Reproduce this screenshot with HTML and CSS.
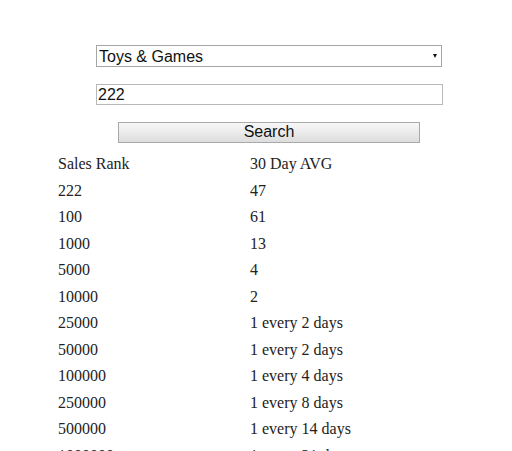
FILE: index.html
```html
<!DOCTYPE html>
<html>
<head>
<meta charset="utf-8">
<link rel="stylesheet" href="styles.css">
</head>
<body>
<div class="page">
  <form class="search">
    <div class="select-wrap">
      <select class="category">
        <option>Toys &amp; Games</option>
      </select>
      <span class="arrow"></span>
    </div>
    <input class="rank" type="text" value="222">
    <button class="btn" type="button">Search</button>
  </form>
  <div class="results">
    <div>Sales Rank</div><div>30 Day AVG</div>
    <div>222</div><div>47</div>
    <div>100</div><div>61</div>
    <div>1000</div><div>13</div>
    <div>5000</div><div>4</div>
    <div>10000</div><div>2</div>
    <div>25000</div><div>1 every 2 days</div>
    <div>50000</div><div>1 every 2 days</div>
    <div>100000</div><div>1 every 4 days</div>
    <div>250000</div><div>1 every 8 days</div>
    <div>500000</div><div>1 every 14 days</div>
    <div>1000000</div><div>1 every 21 days</div>
  </div>
</div>
</body>
</html>
```
FILE: styles.css
```css
html, body {
  margin: 0;
  padding: 0;
  background: #fff;
  overflow: hidden;
}
.page {
  padding-top: 45px;
  font-family: "Liberation Serif", "Times New Roman", serif;
  font-size: 16px;
  color: #222;
}
.search {
  display: flex;
  flex-direction: column;
  align-items: flex-start;
  padding-left: 96px;
  margin: 0;
}
.select-wrap {
  position: relative;
  width: 346px;
  height: 22px;
}
.category {
  appearance: none;
  -webkit-appearance: none;
  width: 346px;
  height: 22px;
  margin: 0;
  padding: 1px 0 0 2px;
  border: 1px solid #a6a6a6;
  border-radius: 0;
  background: #fff;
  font-family: "Liberation Sans", Arial, sans-serif;
  font-size: 16px;
  color: #111;
  line-height: 20px;
}
.arrow {
  position: absolute;
  right: 5px;
  top: 9px;
  width: 0;
  height: 0;
  border-left: 2.5px solid transparent;
  border-right: 2.5px solid transparent;
  border-top: 4px solid #111;
}
.rank {
  box-sizing: border-box;
  width: 347px;
  height: 21px;
  margin: 17px 0 0 0;
  padding: 0 1px;
  border: 1px solid #b8b8b8;
  border-radius: 0;
  font-family: "Liberation Sans", Arial, sans-serif;
  font-size: 16px;
  color: #111;
  outline: none;
}
.btn {
  box-sizing: border-box;
  width: 302px;
  height: 21px;
  margin: 17px 0 0 22px;
  padding: 0 0 2px 0;
  border: 1px solid #a9a9a9;
  border-radius: 0;
  background: linear-gradient(#f8f8f8, #dddddd);
  font-family: "Liberation Sans", Arial, sans-serif;
  font-size: 16px;
  color: #111;
  line-height: 17px;
}
.results {
  display: grid;
  grid-template-columns: 192px auto;
  grid-auto-rows: 26.5px;
  line-height: 26.5px;
  padding: 8px 0 0 58px;
}
```
